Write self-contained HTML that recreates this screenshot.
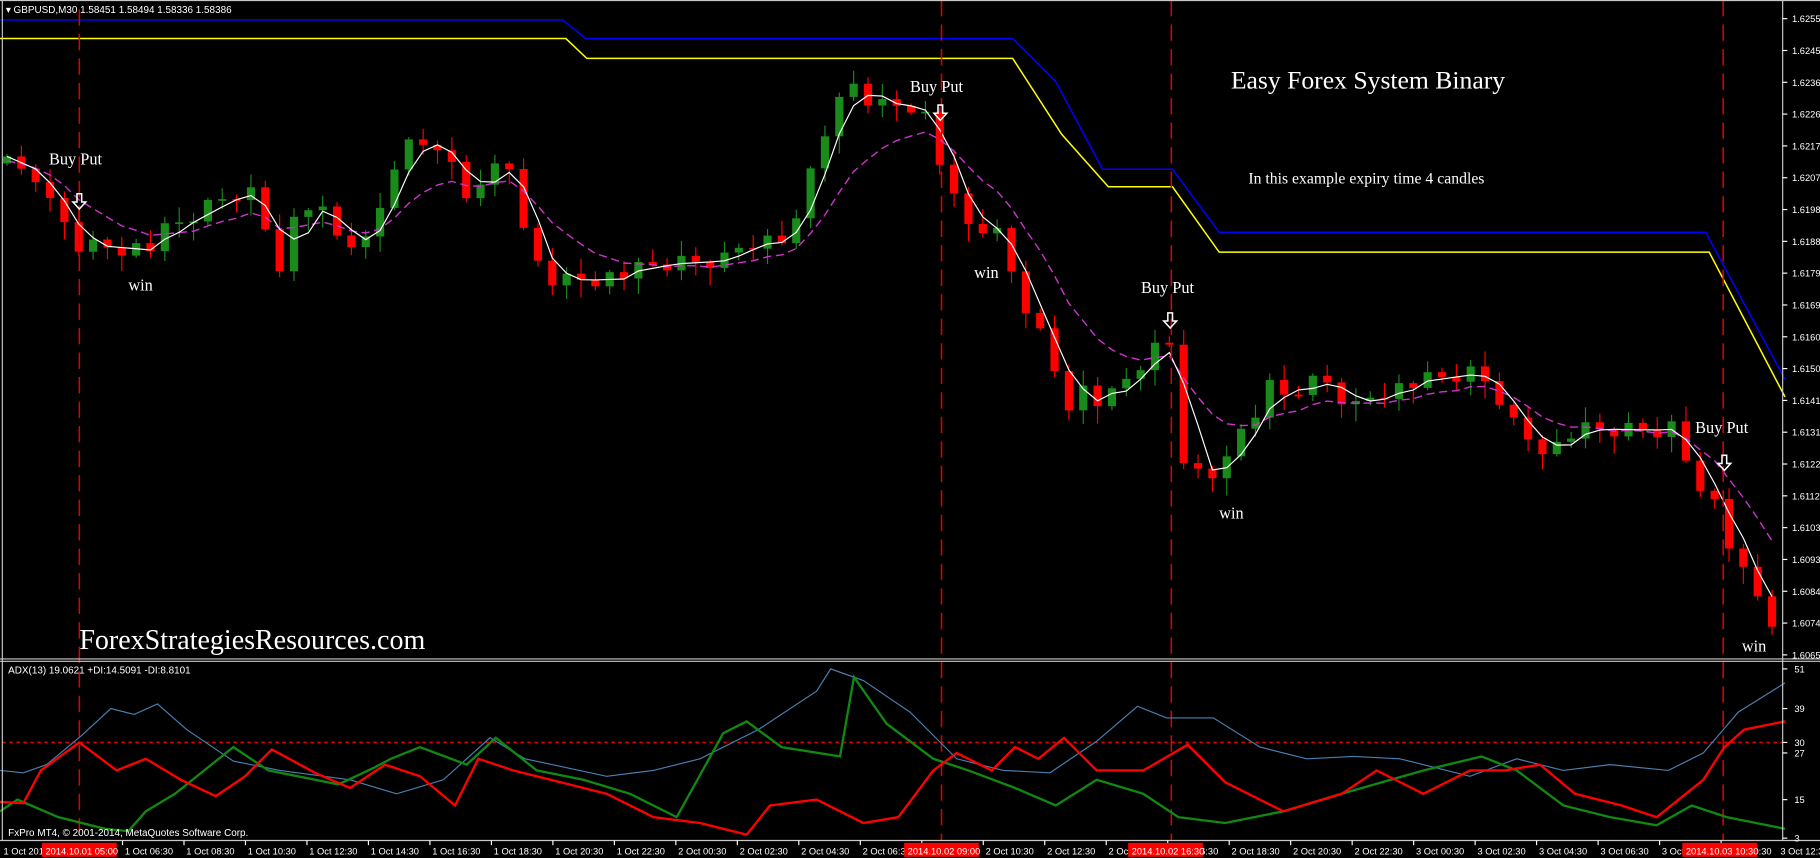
<!DOCTYPE html>
<html><head><meta charset="utf-8"><style>
html,body{margin:0;padding:0;background:#000;overflow:hidden}
svg{display:block}
</style></head><body>
<svg id="s" width="1820" height="858" viewBox="0 0 1560 735" preserveAspectRatio="none" xmlns="http://www.w3.org/2000/svg" font-family="Liberation Sans, sans-serif">
<rect width="1560" height="735" fill="#000"/>
<g id="cand"></g>
<g id="lines"></g>
<g fill="none" stroke-width="1.3">
<polyline stroke="#0000ff" points="0,17 482,17 502,33 868,33 905,70 945,145 1005,145 1045,199 1462,199 1530,325"/>
<polyline stroke="#ffff00" points="0,33 485,33 503,50 868,50 910,115 950,160 1005,160 1045,216 1465,216 1530,340"/>
</g>
<g stroke="#e00000" stroke-width="1.3" stroke-dasharray="14,7">
<line x1="68" y1="8" x2="68" y2="720"/><line x1="807" y1="0" x2="807" y2="720"/><line x1="1004" y1="0" x2="1004" y2="720"/><line x1="1477" y1="0" x2="1477" y2="720"/>
</g>
<line x1="2" y1="636" x2="1528" y2="636" stroke="#e00000" stroke-width="1.3" stroke-dasharray="3,3"/>
<g fill="none" stroke-width="1">
<polyline stroke="#4a7fb0" points="0,660 20,662 40,655 70,630 95,607 115,612 135,603 160,625 200,652 240,660 300,668 340,680 380,668 420,632 450,650 520,665 560,660 600,650 650,625 700,592 712,573 740,583 780,610 820,650 860,660 900,662 940,635 975,605 1000,615 1040,615 1080,640 1120,650 1160,648 1200,650 1260,665 1300,650 1340,660 1380,655 1430,660 1460,645 1490,610 1530,585"/>
</g>
<g fill="none" stroke-width="2">
<polyline stroke="#118811" points="0,695 15,685 50,700 90,710 110,712 125,695 150,680 200,640 230,660 290,672 320,658 335,650 360,640 400,655 425,632 460,660 500,668 540,680 580,700 620,628 640,618 670,640 720,648 732,580 760,620 800,650 830,660 870,675 905,690 940,668 980,680 1010,700 1050,705 1100,695 1150,680 1220,660 1270,648 1300,660 1340,690 1380,700 1420,707 1450,690 1480,700 1530,710"/>
<polyline stroke="#ff0000" points="0,687 20,688 35,660 68,636 100,660 125,650 155,668 185,682 210,665 233,642 270,662 300,675 330,655 360,665 390,690 410,650 440,660 480,670 520,680 560,700 600,705 640,715 660,690 700,685 740,705 770,700 800,660 820,645 850,660 870,640 890,650 912,632 940,660 980,660 1018,638 1050,670 1100,695 1150,680 1180,660 1220,680 1260,660 1290,660 1320,655 1350,680 1390,690 1420,700 1460,668 1478,640 1495,625 1530,618"/>
</g>
<g stroke="#c8c8c8" fill="none" stroke-width="1">
<line x1="2" y1="0" x2="2" y2="720"/><line x1="1528" y1="0" x2="1528" y2="720"/>
<line x1="0" y1="0.5" x2="1560" y2="0.5"/>
<line x1="0" y1="564.5" x2="1560" y2="564.5"/><line x1="0" y1="566.5" x2="1560" y2="566.5"/>
<line x1="0" y1="720" x2="1560" y2="720"/>
</g>
<g id="ax" fill="#fff" font-size="8"></g>
<g fill="#fff" font-size="8.5">
<text x="5" y="11">▾ GBPUSD,M30  1.58451 1.58494 1.58336 1.58386</text>
<text x="7" y="577">ADX(13) 19.0621 +DI:14.5091 -DI:8.8101</text>
<text x="7" y="716">FxPro MT4, © 2001-2014, MetaQuotes Software Corp.</text>
</g>
<g fill="#fff" font-family="Liberation Serif, serif">
<text x="1055" y="76" font-size="22">Easy Forex System Binary</text>
<text x="1070" y="157" font-size="13.5">In this example expiry time 4 candles</text>
<text x="42" y="141" font-size="14">Buy Put</text>
<text x="780" y="79" font-size="14">Buy Put</text>
<text x="978" y="251" font-size="14">Buy Put</text>
<text x="1453" y="371" font-size="14">Buy Put</text>
<text x="110" y="249" font-size="14">win</text>
<text x="835" y="238" font-size="14">win</text>
<text x="1045" y="444" font-size="14">win</text>
<text x="1493" y="558" font-size="14">win</text>
<text x="68" y="556" font-size="24">ForexStrategiesResources.com</text>
</g>
<g id="arr" fill="none" stroke="#fff" stroke-width="1.3"></g>
</svg>
<script>
(function(){
var NS="http://www.w3.org/2000/svg";
function el(p,t,a,txt){var e=document.createElementNS(NS,t);for(var k in a)e.setAttribute(k,a[k]);if(txt)e.textContent=txt;document.getElementById(p).appendChild(e);return e;}
var kp=[[0,140],[30,150],[42,175],[55,190],[68,210],[80,210],[130,212],[140,200],[200,165],[215,165],[240,225],[255,180],[270,175],[290,205],[320,210],[330,155],[345,125],[380,120],[395,165],[410,170],[425,140],[440,140],[450,210],[475,240],[540,235],[560,228],[620,222],[640,205],[680,205],[700,125],[730,70],[750,90],[790,88],[800,122],[820,180],[835,200],[850,190],[870,240],[885,275],[900,300],[912,350],[925,330],[940,345],[955,340],[970,320],[990,300],[1003,295],[1017,410],[1030,405],[1045,410],[1057,360],[1070,380],[1082,330],[1100,340],[1120,330],[1135,325],[1160,350],[1180,335],[1260,320],[1280,330],[1295,360],[1310,375],[1330,385],[1350,370],[1420,368],[1437,365],[1450,410],[1465,415],[1477,455],[1492,490],[1505,510],[1518,530],[1530,558]];
function f(x){for(var i=1;i<kp.length;i++){if(x<=kp[i][0]){var a=kp[i-1],b=kp[i];return a[1]+(b[1]-a[1])*(x-a[0])/(b[0]-a[0]);}}return kp[kp.length-1][1];}
var step=12.3,prev=f(0),closes=[],xs=[];
for(var x=6,i=0;x<1528;x+=step,i++){
 var c=f(x)+((i*37)%11-5)*1.6;
 var o=prev;
 var tp=Math.min(o,c),bt=Math.max(o,c);if(bt-tp<1.5)bt=tp+1.5;
 var hw=((i*53)%7)*1.8+2, lw=((i*29)%9)*1.6+2;
 var col=c<o?"#1a8a1a":"#ff0000";
 el("cand","line",{x1:x,x2:x,y1:tp-hw,y2:bt+lw,stroke:col,"stroke-width":1});
 el("cand","rect",{x:x-3.5,y:tp,width:7,height:bt-tp,fill:col});
 closes.push(c);xs.push(x);prev=c;
}
var pts="",pts2="";
for(var i=0;i<closes.length;i++){var s=0,n=0;for(var j=Math.max(0,i-2);j<=i;j++){s+=closes[j];n++;}pts+=xs[i]+","+(s/n).toFixed(1)+" ";}
var ema=closes[0];
for(var i=0;i<closes.length;i++){ema=ema+(closes[i]-ema)*0.2;pts2+=xs[i]+","+(ema+4).toFixed(1)+" ";}
el("lines","polyline",{points:pts2,fill:"none",stroke:"#cc33cc","stroke-width":1.2,"stroke-dasharray":"7,4"});
el("lines","polyline",{points:pts,fill:"none",stroke:"#ffffff","stroke-width":1});
var pv=["1.62550","1.62455","1.62360","1.62265","1.62170","1.62075","1.61980","1.61885","1.61790","1.61695","1.61600","1.61505","1.61410","1.61315","1.61220","1.61125","1.61030","1.60935","1.60840","1.60745","1.60650"];
for(var i=0;i<pv.length;i++){var y=16+i*27.25;el("ax","text",{x:1536,y:y+3},pv[i]);el("ax","line",{x1:1528,x2:1532,y1:y,y2:y,stroke:"#fff"});}
[["51",573],["39",607],["30",636],["27",645],["15",685],["3",718]].forEach(function(a){el("ax","text",{x:1538,y:a[1]+3},a[0]);el("ax","line",{x1:1528,x2:1532,y1:a[1],y2:a[1],stroke:"#fff"});});
var tl=["1 Oct 06:30","1 Oct 08:30","1 Oct 10:30","1 Oct 12:30","1 Oct 14:30","1 Oct 16:30","1 Oct 18:30","1 Oct 20:30","1 Oct 22:30","2 Oct 00:30","2 Oct 02:30","2 Oct 04:30","2 Oct 06:30","2 Oct 08:30","2 Oct 10:30","2 Oct 12:30","2 Oct 14:30","2 Oct 16:30","2 Oct 18:30","2 Oct 20:30","2 Oct 22:30","3 Oct 00:30","3 Oct 02:30","3 Oct 04:30","3 Oct 06:30","3 Oct 08:30","3 Oct 10:30"];
el("ax","text",{x:3,y:732},"1 Oct 2014");
for(var i=0;i<tl.length;i++){var xx=107+i*52.7;el("ax","text",{x:xx,y:732},tl[i]);el("ax","line",{x1:xx-2,x2:xx-2,y1:720,y2:724,stroke:"#fff"});}
el("ax","rect",{x:1526,y:721,width:34,height:14,fill:"#000"});
el("ax","text",{x:1526,y:732},"3 Oct 12:30");
[[68,"2014.10.01 05:00"],[807,"2014.10.02 09:00"],[999,"2014.10.02 16:30"],[1474,"2014.10.03 10:30"]].forEach(function(a){el("ax","rect",{x:a[0]-32,y:722,width:64,height:12,fill:"#ff0000"});el("ax","text",{x:a[0]-29,y:732,fill:"#ffffff"},a[1]);});
[[68,166],[806,90],[1003,268],[1478,390]].forEach(function(a){var x=a[0],y=a[1];el("arr","path",{d:"M"+(x-2)+" "+y+" v7 h-3.5 l5.5 6 l5.5 -6 h-3.5 v-7 z"});});
})();
</script>
</body></html>
